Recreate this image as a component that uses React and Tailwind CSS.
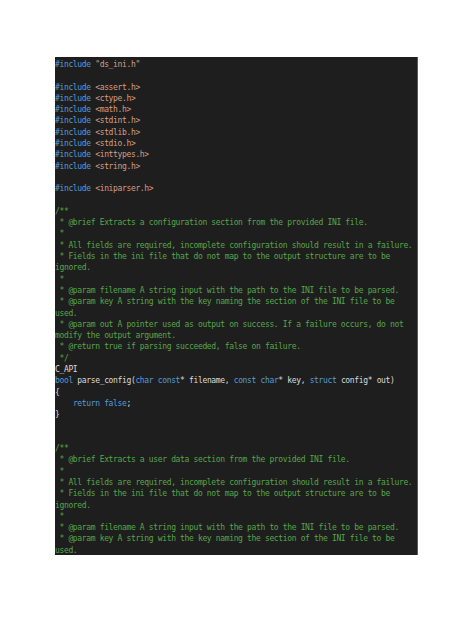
const KW = 'text-[#569cd6]';
const STR = 'text-[#d69d85]';
const CMT = 'text-[#57a64a]';
const TXT = 'text-[#dcdcdc]';

// each line: list of [className, text]
const inc = (file, quoted) => [
  [KW, '#include '],
  [STR, quoted ? `"${file}"` : `<${file}>`],
];

const c = (t) => [[CMT, t]];

const lines = [
  inc('ds_ini.h', true),
  [],
  inc('assert.h'),
  inc('ctype.h'),
  inc('math.h'),
  inc('stdint.h'),
  inc('stdlib.h'),
  inc('stdio.h'),
  inc('inttypes.h'),
  inc('string.h'),
  [],
  inc('iniparser.h'),
  [],
  c('/**'),
  c(' * @brief Extracts a configuration section from the provided INI file.'),
  c(' *'),
  c(' * All fields are required, incomplete configuration should result in a failure.'),
  c(' * Fields in the ini file that do not map to the output structure are to be'),
  c('ignored.'),
  c(' *'),
  c(' * @param filename A string input with the path to the INI file to be parsed.'),
  c(' * @param key A string with the key naming the section of the INI file to be'),
  c('used.'),
  c(' * @param out A pointer used as output on success. If a failure occurs, do not'),
  c('modify the output argument.'),
  c(' * @return true if parsing succeeded, false on failure.'),
  c(' */'),
  [[TXT, 'C_API']],
  [
    [KW, 'bool'],
    [TXT, ' parse_config('],
    [KW, 'char const'],
    [TXT, '* filename, '],
    [KW, 'const char'],
    [TXT, '* key, '],
    [KW, 'struct'],
    [TXT, ' config* out)'],
  ],
  [[TXT, '{']],
  [[TXT, '    '], [KW, 'return false'], [TXT, ';']],
  [[TXT, '}']],
  [],
  [],
  c('/**'),
  c(' * @brief Extracts a user data section from the provided INI file.'),
  c(' *'),
  c(' * All fields are required, incomplete configuration should result in a failure.'),
  c(' * Fields in the ini file that do not map to the output structure are to be'),
  c('ignored.'),
  c(' *'),
  c(' * @param filename A string input with the path to the INI file to be parsed.'),
  c(' * @param key A string with the key naming the section of the INI file to be'),
  c('used.'),
];

export default function App() {
  return (
    <div className="w-[474px] h-[632px] bg-white overflow-hidden">
      <div className="ml-[55px] mt-[57px] w-[363px] h-[498px] bg-[#1e1e1e] border-r border-[#5a5a5a] overflow-hidden pt-[2px]">
        <pre className="font-['DejaVu_Sans_Mono',monospace] text-[8px] leading-[11.3px] tracking-[-0.35px] whitespace-pre">
          {lines.map((segs, i) => (
            <div key={i} className="h-[11.3px]">
              {segs.map(([cls, t], j) => (
                <span key={j} className={cls}>{t}</span>
              ))}
            </div>
          ))}
        </pre>
      </div>
    </div>
  );
}
